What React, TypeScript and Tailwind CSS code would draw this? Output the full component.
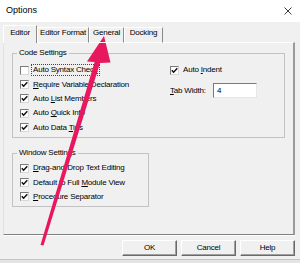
import React from 'react';

type Row = { label: React.ReactNode; checked: boolean; focus?: boolean };

const codeRows: Row[] = [
  { label: <>Auto Syntax Chec<u>k</u></>, checked: false, focus: true },
  { label: <><u>R</u>equire Variable Declaration</>, checked: true },
  { label: <>Auto <u>L</u>ist Members</>, checked: true },
  { label: <>Auto <u>Q</u>uick Info</>, checked: true },
  { label: <>Auto Data <u>T</u>ips</>, checked: true },
];

const windowRows: Row[] = [
  { label: <><u>D</u>rag-and-Drop Text Editing</>, checked: true },
  { label: <>Default to Full <u>M</u>odule View</>, checked: true },
  { label: <><u>P</u>rocedure Separator</>, checked: true },
];

const tabs = ['Editor', 'Editor Format', 'General', 'Docking'];
const tabWidths = ['w-[34px]', 'w-[52px]', 'w-[35px]', 'w-[39px]'];

const CheckBox: React.FC<{ checked: boolean }> = ({ checked }) => (
  <span className="flex h-[9px] w-[9px] shrink-0 items-center justify-center border border-t-[#7a7a7a] border-l-[#7a7a7a] border-r-[#d8d8d8] border-b-[#d8d8d8] bg-white">
    {checked && (
      <svg width="7" height="7" viewBox="0 0 7 7">
        <polyline points="0.8,3.2 2.6,5.2 6.3,1.2" fill="none" stroke="#111" strokeWidth="1.5" />
      </svg>
    )}
  </span>
);

const CheckRow: React.FC<Row> = ({ label, checked, focus }) => (
  <div className="flex h-[14.4px] items-center gap-[2px]">
    <CheckBox checked={checked} />
    <span
      className={
        'border border-dotted px-[1px] leading-[10px] whitespace-nowrap ' +
        (focus ? 'border-[#444]' : 'border-transparent')
      }
    >
      {label}
    </span>
  </div>
);

const DlgButton: React.FC<{ children: React.ReactNode }> = ({ children }) => (
  <div className="flex h-[16px] w-[55px] items-center justify-center border border-t-white border-l-white border-r-[#696969] border-b-[#696969] bg-[#f0f0f0] shadow-[inset_-1px_-1px_0_#a0a0a0]">
    {children}
  </div>
);

export default function App() {
  return (
    <div className="relative h-[263px] w-[300px] overflow-hidden bg-[#f0f0f0] font-['Liberation_Sans',Arial,sans-serif] text-[8px] tracking-[-0.2px] text-black">
      {/* title bar */}
      <div className="flex h-[22px] items-center justify-between bg-white pl-[6px] pr-[8px]">
        <span className="text-[9px] tracking-normal">Options</span>
        <svg width="8" height="8" viewBox="0 0 8 8">
          <path d="M0.5 0.5 L7.5 7.5 M7.5 0.5 L0.5 7.5" stroke="#222" strokeWidth="0.9" />
        </svg>
      </div>

      <div className="flex flex-col pl-[3px] pr-[5px] pt-[3px]">
        {/* tabs */}
        <div className="relative z-10 -mb-[1px] flex h-[18px] items-end">
          {tabs.map((t, i) => (
            <div
              key={t}
              className={
                'flex justify-center border-t border-l border-r border-t-white border-l-white border-r-[#8a8a8a] leading-[10px] ' +
                tabWidths[i] +
                (i === 0 ? ' h-[18px] bg-[#f0f0f0] pt-[2px]' : ' h-[16px] border-b border-b-white')
              }
            >
              {t}
            </div>
          ))}
        </div>

        {/* tab panel */}
        <div className="flex h-[193px] flex-col border-t border-l border-r-2 border-b border-t-white border-l-[#e2e2e2] border-r-[#9a9a9a] border-b-[#808080] shadow-[0_1px_0_white]">
          <fieldset className="mx-[8px] mt-[5px] h-[90px] border border-[#c2c2c2]">
            <legend className="ml-[4px] px-[2px] leading-[10px]">Code Settings</legend>
            <div className="flex pl-[7px] pt-[5px]">
              <div className="flex w-[150px] flex-col">
                {codeRows.map((r, i) => (
                  <CheckRow key={i} {...r} />
                ))}
              </div>
              <div className="flex flex-col">
                <CheckRow label={<>Auto <u>I</u>ndent</>} checked />
                <div className="mt-[6px] flex h-[15px] items-center">
                  <span className="w-[43px] whitespace-nowrap">
                    <u>T</u>ab Width:
                  </span>
                  <div className="flex h-[15px] w-[44px] items-center border border-t-[#7a7a7a] border-l-[#7a7a7a] border-r-[#e6e6e6] border-b-[#e6e6e6] bg-white pl-[3px]">
                    4
                  </div>
                </div>
              </div>
            </div>
          </fieldset>

          <fieldset className="ml-[8px] mt-[10px] h-[59px] w-[137px] border border-[#c2c2c2]">
            <legend className="ml-[4px] px-[2px] leading-[10px]">Window Settings</legend>
            <div className="flex flex-col pl-[7px] pt-[3px]">
              {windowRows.map((r, i) => (
                <CheckRow key={i} {...r} />
              ))}
            </div>
          </fieldset>
        </div>

        {/* buttons */}
        <div className="mt-[5px] flex justify-end gap-[4px]">
          <DlgButton>OK</DlgButton>
          <DlgButton>Cancel</DlgButton>
          <DlgButton>Help</DlgButton>
        </div>
      </div>

      <div className="mt-[3px] h-[1px] bg-[#c4c4c4]" />
      <div className="h-[4px] bg-[#e4e4e4]" />

      {/* pink annotation arrow */}
      <svg className="pointer-events-none absolute inset-0" width="300" height="263" viewBox="0 0 300 263">
        <polygon
          points="40.5,245 94.6,62 87,61.5 104,36 110.5,62.5 100,63 43.5,245.5"
          fill="#e8185e"
        />
      </svg>
    </div>
  );
}
